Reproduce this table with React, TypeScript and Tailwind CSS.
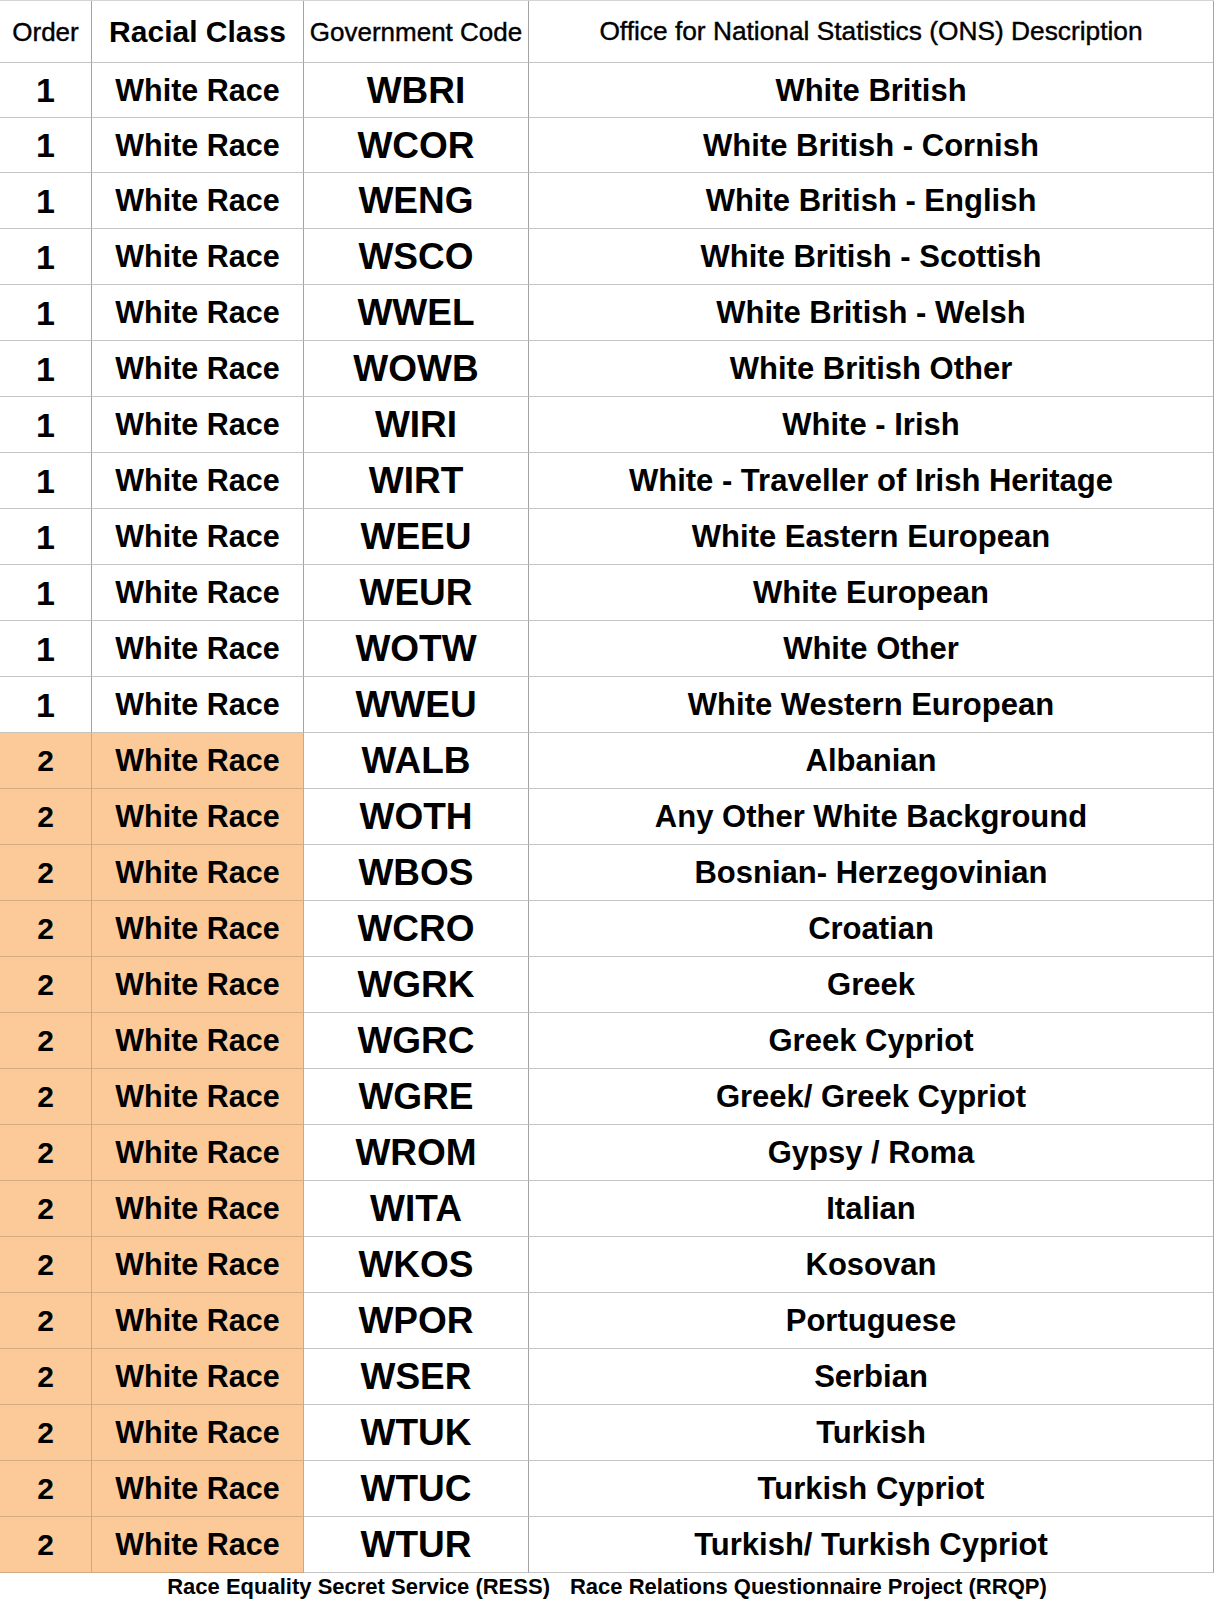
import React from "react";

const rows: [number, string, string][] = [
  [1, "WBRI", "White British"],
  [1, "WCOR", "White British - Cornish"],
  [1, "WENG", "White British - English"],
  [1, "WSCO", "White British - Scottish"],
  [1, "WWEL", "White British - Welsh"],
  [1, "WOWB", "White British Other"],
  [1, "WIRI", "White - Irish"],
  [1, "WIRT", "White - Traveller of Irish Heritage"],
  [1, "WEEU", "White Eastern European"],
  [1, "WEUR", "White European"],
  [1, "WOTW", "White Other"],
  [1, "WWEU", "White Western European"],
  [2, "WALB", "Albanian"],
  [2, "WOTH", "Any Other White Background"],
  [2, "WBOS", "Bosnian- Herzegovinian"],
  [2, "WCRO", "Croatian"],
  [2, "WGRK", "Greek"],
  [2, "WGRC", "Greek Cypriot"],
  [2, "WGRE", "Greek/ Greek Cypriot"],
  [2, "WROM", "Gypsy / Roma"],
  [2, "WITA", "Italian"],
  [2, "WKOS", "Kosovan"],
  [2, "WPOR", "Portuguese"],
  [2, "WSER", "Serbian"],
  [2, "WTUK", "Turkish"],
  [2, "WTUC", "Turkish Cypriot"],
  [2, "WTUR", "Turkish/ Turkish Cypriot"],
];

const cellW =
  "flex items-center justify-center leading-none whitespace-nowrap border-r border-b border-r-[#a3a3a3] border-b-[#c4c4c4] bg-white";
const cellO =
  "flex items-center justify-center leading-none whitespace-nowrap border-r border-b border-r-[#d2a57a] border-b-[#d4ab82] bg-[#fcca98]";

export default function App() {
  return (
    <div className="w-[1214px] h-[1600px] bg-white text-black font-['Liberation_Sans',Arial,sans-serif] overflow-hidden">
      <div className="grid grid-cols-[92px_212px_225px_685px] grid-rows-[100%] h-[63px] border-t border-t-[#d4d4d4]">
        <div className={cellW + " text-[26px] [-webkit-text-stroke:0.4px_black]"}>Order</div>
        <div className={cellW + " text-[30px] font-bold"}>Racial Class</div>
        <div className={cellW + " text-[26px] [-webkit-text-stroke:0.4px_black]"}>Government Code</div>
        <div className={cellW + " text-[26.3px] [-webkit-text-stroke:0.4px_black]"}>
          Office for National Statistics (ONS) Description
        </div>
      </div>
      {rows.map(([order, code, desc], i) => {
        const c = order === 2 ? cellO : cellW;
        const h = i < 2 ? "h-[55px]" : "h-[56px]";
        return (
          <div key={i} className={"grid grid-cols-[92px_212px_225px_685px] grid-rows-[100%] " + h}>
            <div className={c + (order === 1 ? " text-[34px] font-bold" : " text-[30px] font-bold")}>
              {order}
            </div>
            <div className={c + " text-[30.5px] font-bold"}>White Race</div>
            <div className={cellW + " text-[37px] font-bold"}>{code}</div>
            <div className={cellW + " text-[31px] font-bold"}>{desc}</div>
          </div>
        );
      })}
      <div className="h-[28px] flex items-center justify-center gap-[20px] border-b border-b-[#d4d4d4] text-[22px] font-bold leading-none">
        <span>Race Equality Secret Service (RESS)</span>
        <span>Race Relations Questionnaire Project (RRQP)</span>
      </div>
    </div>
  );
}
